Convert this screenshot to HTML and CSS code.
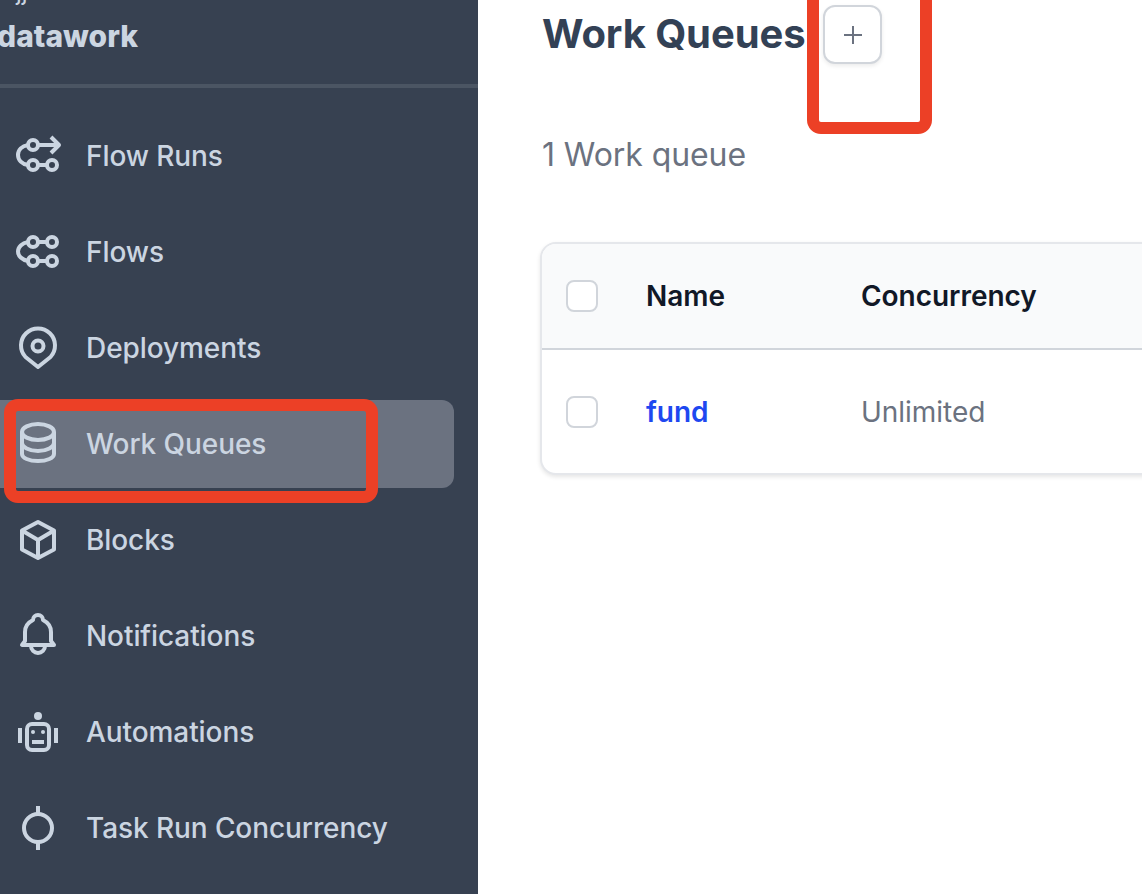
FILE: index.html
```html
<!DOCTYPE html>
<html lang="en">
<head>
    <meta charset="UTF-8">
    <title>Work Queues</title>
    <link rel="stylesheet" href="styles.css">
</head>
<body>
    <div class="app">
        <aside class="sidebar">
            <div class="workspace">
                <div class="account">jjohnsonhome</div>
                <div class="workspace-name">datawork</div>
            </div>
            <nav class="nav">
                <a class="nav-item">
                    <svg class="nav-icon" viewBox="0 0 48 48"><circle cx="19" cy="13" r="5"/><circle cx="19" cy="33" r="5"/><circle cx="38" cy="33" r="5"/><path d="M24 13h20M37 5l8 8-8 8M14 13C8 14 4 18 4 23s4 9 10 10M24 33h9"/></svg>
                    <span>Flow Runs</span>
                </a>
                <a class="nav-item">
                    <svg class="nav-icon" viewBox="0 0 48 48"><circle cx="19" cy="14" r="5"/><circle cx="19" cy="33" r="5"/><circle cx="38" cy="14" r="5"/><circle cx="38" cy="33" r="5"/><path d="M24 14h9M24 33h9M14 14C8 15 4 19 4 23.500s4 8.500 10 9.500"/></svg>
                    <span>Flows</span>
                </a>
                <a class="nav-item">
                    <svg class="nav-icon" viewBox="0 0 48 48"><path d="M24 43 11.500 33a17 17 0 1 1 25 0z"/><circle cx="24" cy="22" r="5.500"/></svg>
                    <span>Deployments</span>
                </a>
                <a class="nav-item active">
                    <svg class="nav-icon" viewBox="0 0 48 48"><ellipse cx="24" cy="12" rx="16" ry="8"/><path d="M8 12v22c0 4 7 7 16 7s16-3 16-7V12M8 23c0 4 7 8 16 8s16-4 16-8"/></svg>
                    <span>Work Queues</span>
                </a>
                <a class="nav-item">
                    <svg class="nav-icon" viewBox="0 0 48 48"><path d="M24 6 40 14.500v19L24 42 8 33.500v-19zM8 14.500 24 24l16-9.500M24 24v18"/></svg>
                    <span>Blocks</span>
                </a>
                <a class="nav-item">
                    <svg class="nav-icon" viewBox="0 0 48 48"><path d="M8 33h32l-3-4v-9c0-6-4-10-8-12a5 5 0 0 0-10 0c-4 2-8 6-8 12v9zM17 34a7 7 0 0 0 14 0"/></svg>
                    <span>Notifications</span>
                </a>
                <a class="nav-item">
                    <svg class="nav-icon" viewBox="0 0 48 48"><rect x="13" y="16" width="22" height="26" rx="5"/><path d="M6 20v15M42 20v15M18 34h12"/><circle class="dot" cx="24" cy="8" r="4"/><circle class="dot" cx="19" cy="24" r="2"/><circle class="dot" cx="29" cy="24" r="2"/></svg>
                    <span>Automations</span>
                </a>
                <a class="nav-item">
                    <svg class="nav-icon" viewBox="0 0 48 48"><circle cx="24" cy="24" r="14"/><path d="M24 2v8M24 38v8"/></svg>
                    <span>Task Run Concurrency</span>
                </a>
            </nav>
        </aside>

        <main class="content">
            <div class="page-title">
                <h1>Work Queues</h1>
                <button class="add-button">
                    <svg viewBox="0 0 20 20"><path d="M10 1v18M1 10h18"/></svg>
                </button>
            </div>
            <p class="count">1 Work queue</p>

            <div class="table-card">
                <div class="row head">
                    <span class="check"></span>
                    <span class="col-name">Name</span>
                    <span>Concurrency</span>
                </div>
                <div class="row">
                    <span class="check"></span>
                    <a class="col-name queue-link">fund</a>
                    <span class="muted">Unlimited</span>
                </div>
            </div>
        </main>
    </div>

    <!-- red boxes drawn on top of the screenshot -->
    <div class="mark mark-nav"></div>
    <div class="mark mark-add"></div>
</body>
</html>
```

FILE: styles.css
```css
:root {
    --sidebar: #374151;
    --sidebar-text: #cbd5e1;
    --mark: #ec4026;
    --border: #d1d5db;
}

html, body {
    height: 100%;
}

body {
    margin: 0;
    overflow: hidden;
    font-family: Inter, "Liberation Sans", sans-serif;
    background: #ffffff;
}

.app {
    display: flex;
    height: 894px;
    overflow: hidden;
}

.sidebar {
    flex: 0 0 478px;
    background: var(--sidebar);
    color: var(--sidebar-text);
    overflow: hidden;
}

.workspace {
    height: 84px;
    border-bottom: 4px solid #4b5563;
    overflow: hidden;
}

.account {
    margin: -20px 0 0 16px;
    height: 24px;
    font-size: 24px;
    line-height: 24px;
    white-space: nowrap;
}

.workspace-name {
    margin: 14px 0 0 -3px;
    font-size: 30px;
    line-height: 36px;
    font-weight: 800;
}

.nav {
    display: flex;
    flex-direction: column;
    gap: 8px;
    padding: 24px 24px 0 0;
}

.nav-item {
    display: flex;
    align-items: center;
    height: 88px;
    flex: none;
    gap: 24px;
    padding-left: 14px;
    border-radius: 0 12px 12px 0;
    font-size: 28px;
    font-weight: 500;
    letter-spacing: -0.08px;
    white-space: nowrap;
}

.nav-item.active {
    background: #6b7280;
}

.nav-icon {
    width: 48px;
    height: 48px;
    flex: none;
    fill: none;
    stroke: var(--sidebar-text);
    stroke-width: 4;
    stroke-linejoin: round;
}

.nav-icon .dot {
    fill: var(--sidebar-text);
    stroke: none;
}

.content {
    flex: 1;
    padding-left: 64px;
    min-width: 0;
}

.page-title {
    display: flex;
    align-items: flex-start;
    gap: 18px;
    height: 64px;
    padding-top: 5px;
}

.page-title h1 {
    margin: 1px 0 0;
    font-size: 40px;
    line-height: 56px;
    font-weight: 700;
    letter-spacing: -0.1px;
    color: #334155;
    white-space: nowrap;
}

.add-button {
    width: 59px;
    height: 59px;
    padding: 0;
    display: flex;
    align-items: center;
    justify-content: center;
    border: 2px solid var(--border);
    border-radius: 12px;
    background: #ffffff;
    box-shadow: 0 2px 4px rgba(0, 0, 0, 0.08);
}

.add-button svg {
    width: 20px;
    height: 20px;
    fill: none;
    stroke: #6b7280;
    stroke-width: 2;
}

.count {
    margin: 66px 0 0;
    font-size: 32px;
    line-height: 40px;
    letter-spacing: -0.08px;
    color: #6b7280;
}

.table-card {
    margin: 67px -40px 0 -2px;
    border: 2px solid #e5e7eb;
    border-radius: 16px;
    background: #ffffff;
    box-shadow: 0 2px 4px rgba(0, 0, 0, 0.1);
    overflow: hidden;
}

.row {
    display: flex;
    align-items: center;
    height: 123px;
    padding-left: 24px;
    font-size: 28px;
    letter-spacing: -0.03px;
}

.row.head {
    height: 104px;
    background: #f9fafb;
    border-bottom: 2px solid var(--border);
    font-weight: 600;
    color: #111827;
}

.check {
    width: 32px;
    height: 32px;
    box-sizing: border-box;
    flex: none;
    border: 2px solid var(--border);
    border-radius: 8px;
    background: #ffffff;
}

.col-name {
    width: 215px;
    margin-left: 48px;
}

.queue-link {
    font-weight: 600;
    color: #1e48f0;
}

.muted {
    color: #6b7280;
}

.mark {
    position: absolute;
    box-sizing: border-box;
    border: 12px solid var(--mark);
}

.mark-nav {
    left: 4px;
    top: 399px;
    width: 374px;
    height: 104px;
    border-radius: 14px;
}

.mark-add {
    left: 807px;
    top: -20px;
    width: 125px;
    height: 154px;
    border-radius: 14px;
}
```
